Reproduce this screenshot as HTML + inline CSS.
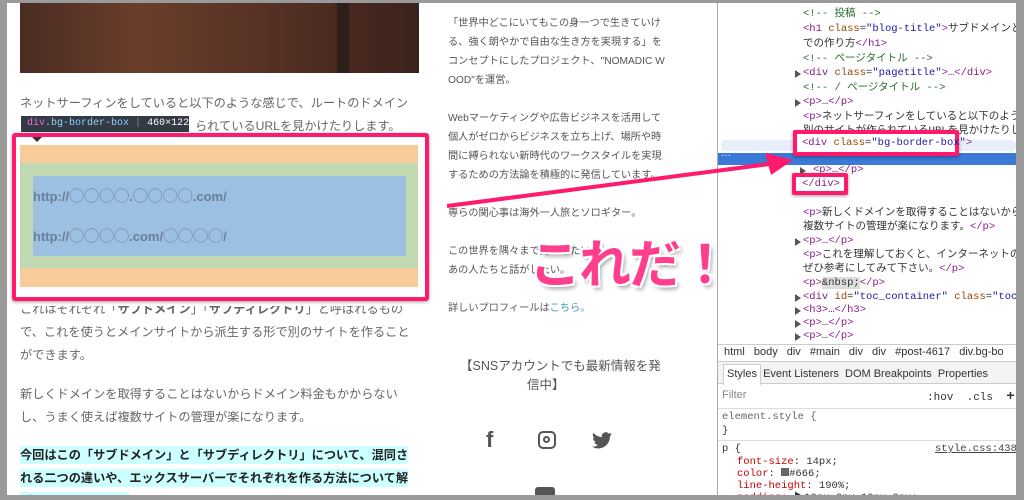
<!DOCTYPE html>
<html><head><meta charset="utf-8"><style>
*{margin:0;padding:0;box-sizing:border-box}
body{width:1024px;height:500px;position:relative;overflow:hidden;background:#9a9a9a;font-family:"Liberation Sans","Noto Sans CJK JP",sans-serif}
.page{position:absolute;left:7px;top:3px;width:1009px;height:492px;background:#fff;overflow:hidden}
.abs{position:absolute;white-space:nowrap}
.lt{color:#666;font-size:12.2px;left:13px;line-height:18px}
.mid{color:#555;font-size:10.2px;left:441px}
.dt{font-family:"Liberation Mono","Noto Sans CJK JP",monospace;font-size:10.5px;line-height:13px;color:#333;left:796px}
.tg{color:#8a1a8a}.at{color:#994500}.av{color:#1a1aa6}.cm{color:#236e25}
.tri{position:absolute;left:788px;width:0;height:0;border-left:6px solid #555;border-top:4px solid transparent;border-bottom:4px solid transparent}
</style></head><body>
<div class="page">
<div class="abs" style="left:13px;top:0;width:399px;height:70px;background:linear-gradient(90deg,#4a2c22,#6a3e2a 30%,#5a3426 55%,#4a2a20 80%,#3a231c)"></div>
<div class="abs" style="left:330px;top:0;width:12px;height:70px;background:#2e1f1a"></div>
<div class="abs lt" style="top:91px">ネットサーフィンをしていると以下のような感じで、ルートのドメイン</div>
<div class="abs lt" style="top:114px;left:188px">られているURLを見かけたりします。</div>
<div class="abs" style="left:14px;top:113px;width:168px;height:16px;background:#333a44;color:#fff;font:10px 'Liberation Mono',monospace;line-height:16px;padding-left:6px"><span style="color:#e86bd8">div</span><span style="color:#8fd0ff">.bg-border-box</span> <span style="color:#888">|</span> 460×122</div>
<div class="abs" style="left:25px;top:134px;border-left:5px solid transparent;border-right:5px solid transparent;border-top:5px solid #333"></div>
<div class="abs" style="left:13px;top:142px;width:398px;height:142px;background:#f8cc9a"></div>
<div class="abs" style="left:13px;top:160px;width:398px;height:105px;background:#c0d9b0"></div>
<div class="abs" style="left:26px;top:173px;width:373px;height:80px;background:#9bc0e2"></div>
<div class="abs" style="left:26px;top:182px;font-size:13px;font-weight:bold;color:#6a7f98">http://<span style="font-weight:normal;font-size:15px">◯◯◯◯</span>.<span style="font-weight:normal;font-size:15px">◯◯◯◯</span>.com/</div>
<div class="abs" style="left:26px;top:222px;font-size:13px;font-weight:bold;color:#6a7f98">http://<span style="font-weight:normal;font-size:15px">◯◯◯◯</span>.com/<span style="font-weight:normal;font-size:15px">◯◯◯◯</span>/</div>
<div class="abs" style="left:5px;top:130px;width:417px;height:168px;border:4px solid #ff1a6e;border-radius:3px;box-shadow:0 1px 3px rgba(0,0,0,.4)"></div>
<div class="abs lt" style="top:297px;clip-path:inset(6px 0 0 0)">これはそれぞれ「<b>サブドメイン</b>」「<b>サブディレクトリ</b>」と呼ばれるもの</div>
<div class="abs lt" style="top:320px">で、これを使うとメインサイトから派生する形で別のサイトを作ること</div>
<div class="abs lt" style="top:343px">ができます。</div>
<div class="abs lt" style="top:382px">新しくドメインを取得することはないからドメイン料金もかからない</div>
<div class="abs lt" style="top:405px">し、うまく使えば複数サイトの管理が楽になります。</div>
<div class="abs lt" style="top:443px;color:#222;font-weight:bold;background:#cff">今回はこの「サブドメイン」と「サブディレクトリ」について、混同さ</div>
<div class="abs lt" style="top:466px;color:#222;font-weight:bold;background:#cff">れる二つの違いや、エックスサーバーでそれぞれを作る方法について解</div>
<div class="abs lt" style="top:489px;color:#222;font-weight:bold;background:#cff">説をしてみました。</div>
<div class="abs mid" style="top:11px">「世界中どこにいてもこの身一つで生きていけ</div>
<div class="abs mid" style="top:30px">る、強く朗やかで自由な生き方を実現する」を</div>
<div class="abs mid" style="top:49px">コンセプトにしたプロジェクト、"NOMADIC W</div>
<div class="abs mid" style="top:68px">OOD"を運営。</div>
<div class="abs mid" style="top:106px">Webマーケティングや広告ビジネスを活用して</div>
<div class="abs mid" style="top:125px">個人がゼロからビジネスを立ち上げ、場所や時</div>
<div class="abs mid" style="top:144px">間に縛られない新時代のワークスタイルを実現</div>
<div class="abs mid" style="top:163px">するための方法論を積極的に発信しています。</div>
<div class="abs mid" style="top:201px">専らの関心事は海外一人旅とソロギター。</div>
<div class="abs mid" style="top:239px">この世界を隅々まで見てみたい。</div>
<div class="abs mid" style="top:258px">あの人たちと話がしたい。</div>
<div class="abs mid" style="top:296px">詳しいプロフィールは<span style="color:#3a9ec0">こちら。</span></div>
<div class="abs" style="left:453px;top:352px;font-size:12.5px;color:#555">【SNSアカウントでも最新情報を発</div>
<div class="abs" style="left:520px;top:371px;font-size:12.5px;color:#555">信中】</div>
<div class="abs" style="left:479px;top:424px;font:bold 22px 'Liberation Sans';color:#555">f</div>
<div class="abs" style="left:531px;top:428px;width:18px;height:18px;border:2.5px solid #555;border-radius:5px"><div style="position:absolute;left:3px;top:3px;width:7px;height:7px;border:2px solid #555;border-radius:50%"></div></div>
<svg class="abs" style="left:585px;top:429px" width="20" height="17" viewBox="0 0 24 20"><path d="M24 2.4a10 10 0 0 1-2.8.8A5 5 0 0 0 23.3.5a10 10 0 0 1-3.1 1.2A4.9 4.9 0 0 0 11.8 6 14 14 0 0 1 1.7.9a4.9 4.9 0 0 0 1.5 6.6A4.9 4.9 0 0 1 1 6.9a4.9 4.9 0 0 0 3.9 4.8 5 5 0 0 1-2.2.1 4.9 4.9 0 0 0 4.6 3.4A9.9 9.9 0 0 1 0 17.3 14 14 0 0 0 7.5 19.5c9 0 14-7.5 14-14v-.6A10 10 0 0 0 24 2.4z" fill="#555"/></svg>
<div class="abs" style="left:528px;top:484px;width:20px;height:12px;background:#555;border-radius:3px"></div>
<div class="abs" style="left:710px;top:0;width:1px;height:492px;background:#aaa"></div>
<div class="abs dt cm" style="top:5px">&lt;!-- 投稿 --&gt;</div>
<div class="abs dt" style="top:20px"><span class="tg">&lt;h1 </span><span class="at">class</span>=<span class="av">"blog-title"</span><span class="tg">&gt;</span>サブドメインとサブ</div>
<div class="abs dt" style="top:35px">での作り方<span class="tg">&lt;/h1&gt;</span></div>
<div class="abs dt cm" style="top:50px">&lt;!-- ページタイトル --&gt;</div>
<div class="tri" style="top:67px"></div>
<div class="abs dt" style="top:64px"><span class="tg">&lt;div </span><span class="at">class</span>=<span class="av">"pagetitle"</span><span class="tg">&gt;</span>…<span class="tg">&lt;/div&gt;</span></div>
<div class="abs dt cm" style="top:79px">&lt;!-- / ページタイトル --&gt;</div>
<div class="tri" style="top:96px"></div>
<div class="abs dt" style="top:93px"><span class="tg">&lt;p&gt;</span>…<span class="tg">&lt;/p&gt;</span></div>
<div class="abs dt" style="top:108px"><span class="tg">&lt;p&gt;</span>ネットサーフィンをしていると以下のような感</div>
<div class="abs dt" style="top:122px">別のサイトが作られているURLを見かけたりします</div>
<div class="abs" style="left:714px;top:137px;width:295px;height:11px;background:#e8eefa;border-radius:5px"></div>
<div class="abs" style="left:711px;top:150px;width:298px;height:12px;background:#3a79d6"></div>
<div class="abs" style="left:714px;top:147px;color:#fff;font-size:10px">···</div>
<div class="tri" style="top:164px;left:793px"></div>
<div class="abs dt" style="top:161px;left:806px"><span class="tg">&lt;p&gt;</span>…<span class="tg">&lt;/p&gt;</span></div>
<div class="abs" style="left:786px;top:127px;width:166px;height:26px;border:4px solid #ff1a6e;border-radius:2px;background:#fff;box-shadow:0 1px 3px rgba(0,0,0,.4)"></div>
<div class="abs dt" style="top:134px;left:795px"><span class="tg">&lt;div </span><span class="at">class</span>=<span class="av">"bg-border-box"</span><span class="tg">&gt;</span></div>
<div class="abs" style="left:785px;top:170px;width:56px;height:22px;border:4px solid #ff1a6e;border-radius:2px;background:#fff;box-shadow:0 1px 3px rgba(0,0,0,.4)"></div>
<div class="abs dt" style="top:175px;left:795px"><span class="tg">&lt;/div&gt;</span></div>
<div class="abs dt" style="top:204px"><span class="tg">&lt;p&gt;</span>新しくドメインを取得することはないからドメ</div>
<div class="abs dt" style="top:218px">複数サイトの管理が楽になります。<span class="tg">&lt;/p&gt;</span></div>
<div class="tri" style="top:235px"></div>
<div class="abs dt" style="top:232px"><span class="tg">&lt;p&gt;</span>…<span class="tg">&lt;/p&gt;</span></div>
<div class="abs dt" style="top:246px"><span class="tg">&lt;p&gt;</span>これを理解しておくと、インターネットの仕組</div>
<div class="abs dt" style="top:260px">ぜひ参考にしてみて下さい。<span class="tg">&lt;/p&gt;</span></div>
<div class="abs dt" style="top:274px"><span class="tg">&lt;p&gt;</span><span style="background:#ddd">&amp;nbsp;</span><span class="tg">&lt;/p&gt;</span></div>
<div class="tri" style="top:291px"></div>
<div class="abs dt" style="top:288px"><span class="tg">&lt;div </span><span class="at">id</span>=<span class="av">"toc_container"</span> <span class="at">class</span>=<span class="av">"toc_whi</span></div>
<div class="tri" style="top:304px"></div>
<div class="abs dt" style="top:301px"><span class="tg">&lt;h3&gt;</span>…<span class="tg">&lt;/h3&gt;</span></div>
<div class="tri" style="top:317px"></div>
<div class="abs dt" style="top:314px"><span class="tg">&lt;p&gt;</span>…<span class="tg">&lt;/p&gt;</span></div>
<div class="tri" style="top:330px"></div>
<div class="abs dt" style="top:327px"><span class="tg">&lt;p&gt;</span>…<span class="tg">&lt;/p&gt;</span></div>
<div class="abs" style="left:711px;top:341px;width:298px;height:1px;background:#ccc"></div>
<div class="abs" style="left:717px;top:343px;font-size:11px;color:#333;word-spacing:6px">html body div #main div div #post-4617 div.bg-bo</div>
<div class="abs" style="left:711px;top:358px;width:298px;height:1px;background:#ccc"></div>
<div class="abs" style="left:711px;top:359px;width:298px;height:22px;background:#f3f3f3;border-bottom:1px solid #ccc"></div>
<div class="abs" style="left:716px;top:361px;width:38px;height:21px;background:#fff;border:1px solid #ccc;border-bottom:none"></div>
<div class="abs" style="left:720px;top:365px;font-size:11px;color:#333">Styles&nbsp;&nbsp;Event Listeners&nbsp;&nbsp;DOM Breakpoints&nbsp;&nbsp;Properties</div>
<div class="abs" style="left:715px;top:386px;font-size:11px;color:#888">Filter</div>
<div class="abs" style="left:920px;top:386px;font:11px 'Liberation Mono';color:#333">:hov&nbsp; .cls&nbsp; <b style="font-size:14px">+</b></div>
<div class="abs" style="left:711px;top:405px;width:298px;height:1px;background:#ddd"></div>
<div class="abs dt" style="left:715px;top:408px;color:#666">element.style {</div>
<div class="abs dt" style="left:715px;top:422px">}</div>
<div class="abs" style="left:711px;top:437px;width:298px;height:1px;background:#ddd"></div>
<div class="abs dt" style="left:715px;top:440px">p {</div>
<div class="abs dt" style="left:928px;top:440px;text-decoration:underline;color:#444">style.css:438</div>
<div class="abs dt" style="left:730px;top:453px"><span style="color:#c80000">font-size</span>: 14px;</div>
<div class="abs dt" style="left:730px;top:465px"><span style="color:#c80000">color</span>: <span style="display:inline-block;width:8px;height:8px;background:#666"></span>#666;</div>
<div class="abs dt" style="left:730px;top:477px"><span style="color:#c80000">line-height</span>: 190%;</div>
<div class="abs dt" style="left:730px;top:489px"><span style="color:#c80000">padding</span>: ▶10px 0px 10px 0px;</div>
<svg class="abs" style="left:0;top:0" width="1009" height="492"><line x1="440" y1="203" x2="770" y2="160" stroke="#ff1a6e" stroke-width="4"/><polygon points="786,157 758,150 764,172" fill="#ff1a6e"/></svg>
<div class="abs" style="left:522px;top:220px;font-size:52px;font-weight:bold;color:#ff3f8e;letter-spacing:-2px;text-shadow:2px 2px 0 #fff,-2px -2px 0 #fff,2px -2px 0 #fff,-2px 2px 0 #fff,3px 4px 4px rgba(0,0,0,.35)">これだ！</div>
</div>
</body></html>
